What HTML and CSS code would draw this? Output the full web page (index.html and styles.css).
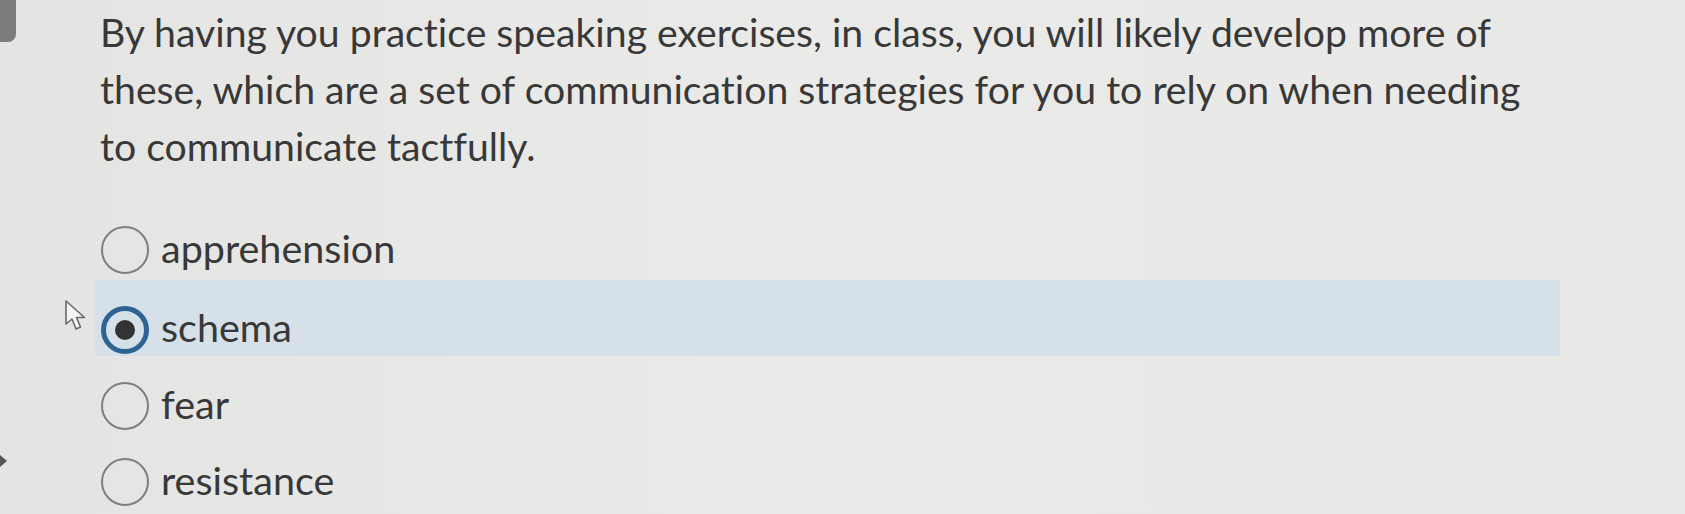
FILE: index.html
```html
<!DOCTYPE html>
<html>
<head>
<meta charset="utf-8">
<link rel="stylesheet" href="styles.css">
</head>
<body>
<div class="page">
  <div class="edge-bar"></div>
  <div class="edge-mark"></div>
  <div class="question">
    <p class="prompt">By having you practice speaking exercises, in class, you will likely develop more of these, which are a set of communication strategies for you to rely on when needing to communicate tactfully.</p>
    <div class="answers">
      <label class="answer first">
        <span class="radio"></span>
        <span class="label">apprehension</span>
      </label>
      <label class="answer selected">
        <svg class="cursor" width="26" height="34" viewBox="0 0 26 34"><path d="M2 2 L2 25 L8 20 L12 30 L16.5 28 L12.5 18.5 L20.5 18.5 Z" fill="#f4f4f4" stroke="#6a6a6a" stroke-width="1.6" stroke-linejoin="round"/></svg>
        <span class="radio"><span class="dot"></span></span>
        <span class="label">schema</span>
      </label>
      <label class="answer third">
        <span class="radio"></span>
        <span class="label">fear</span>
      </label>
      <label class="answer">
        <span class="radio"></span>
        <span class="label">resistance</span>
      </label>
    </div>
  </div>
</div>
</body>
</html>
```
FILE: styles.css
```css
html, body {
  margin: 0;
  padding: 0;
}
body {
  width: 1685px;
  height: 514px;
  overflow: hidden;
  background: #e9e9e7;
  font-family: Lato, "Open Sans", sans-serif;
  font-variant-ligatures: none;
  color: #383838;
}
.page {
  position: relative;
  width: 1685px;
  height: 514px;
  background: linear-gradient(90deg, #e4e4e2 0%, #eaeae8 45%, #e8e8e6 100%);
}
.edge-bar {
  position: absolute;
  left: 0;
  top: 0;
  width: 16px;
  height: 42px;
  background: #7c7c7a;
  border-bottom-right-radius: 8px;
}
.edge-mark {
  position: absolute;
  left: 0;
  top: 455px;
  width: 0;
  height: 0;
  border-top: 6px solid transparent;
  border-bottom: 6px solid transparent;
  border-left: 7px solid #555;
}
.question {
  padding: 3px 0 0 100px;
  width: 1440px;
}
.prompt {
  margin: 0;
  font-size: 39.2px;
  line-height: 57px;
}
.answers {
  display: flex;
  flex-direction: column;
  margin-left: -5px;
  margin-right: -20px;
}
.answer {
  position: relative;
  display: flex;
  align-items: center;
  gap: 12px;
  height: 76px;
  padding-left: 6px;
  font-size: 39.5px;
}
.answer.first {
  margin-top: 38px;
}
.answer.selected {
  margin-top: -8px;
  align-items: flex-end;
  padding-bottom: 2px;
  box-sizing: border-box;
  background: #d5e0e9;
}
.answer.third {
  margin-top: 12px;
}
.radio {
  flex: none;
  width: 48px;
  height: 48px;
  border: 2.5px solid #7f7f7f;
  border-radius: 50%;
  box-sizing: border-box;
  display: flex;
  align-items: center;
  justify-content: center;
}
.selected .radio {
  border: 5px solid #2e6494;
}
.dot {
  width: 20px;
  height: 20px;
  border-radius: 50%;
  background: #333;
}
.label {
  position: relative;
  top: -3px;
}
.selected .label {
  top: -4px;
}
.cursor {
  position: absolute;
  left: -31px;
  top: 19px;
}
```
